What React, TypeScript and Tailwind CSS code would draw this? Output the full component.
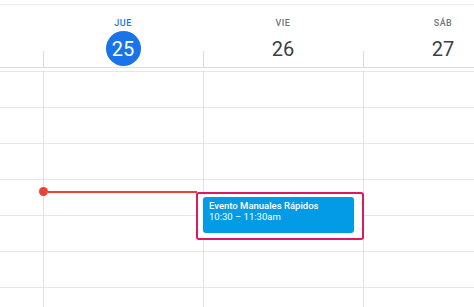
import React from "react";

const days = [
  { label: "JUE", num: "25", today: true },
  { label: "VIE", num: "26", today: false },
  { label: "SÁB", num: "27", today: false },
];

const hours = [0, 1, 2, 3, 4, 5, 6];

export default function App() {
  return (
    <div
      className="h-[307px] w-[474px] overflow-hidden bg-white"
      style={{ fontFamily: "Roboto, 'Noto Sans', Arial, sans-serif" }}
    >
      <div className="h-[5px] border-b border-[#ececec]" />

      {/* Day header */}
      <div className="flex h-[63px] border-b border-[#dadce0]">
        <div className="w-[43px] shrink-0" />
        {days.map((d) => (
          <div
            key={d.num}
            className="relative flex w-[160px] shrink-0 flex-col items-center pt-[12px] before:absolute before:bottom-0 before:left-0 before:h-[16px] before:border-l before:border-[#dadce0]"
          >
            <span
              className={`text-[9px] font-medium leading-[12px] tracking-[0.5px] ${
                d.today ? "text-[#1a73e8]" : "text-[#70757a]"
              }`}
            >
              {d.label}
            </span>
            {d.today ? (
              <div className="mt-[2px] flex h-[35px] w-[35px] items-center justify-center rounded-full bg-[#1a73e8] text-[20px] text-white">
                {d.num}
              </div>
            ) : (
              <div className="mt-[2px] flex h-[35px] items-center text-[20px] text-[#3c4043]">
                {d.num}
              </div>
            )}
          </div>
        ))}
      </div>

      {/* Grid body */}
      <div className="relative mt-[3px] flex">
        <div className="w-[43px] shrink-0">
          {hours.map((h) => (
            <div key={h} className="h-[36px] border-t border-[#e6e6e6]" />
          ))}
        </div>
        {days.map((d) => (
          <div key={d.num} className="w-[160px] shrink-0 border-l border-[#e0e0e0]">
            {hours.map((h) => (
              <div key={h} className="h-[36px] border-t border-[#e6e6e6]" />
            ))}
          </div>
        ))}

        {/* current time line */}
        <div className="absolute left-[39px] top-[116px] flex w-[158px] items-center">
          <div className="h-[9px] w-[9px] shrink-0 rounded-full bg-[#ea4335]" />
          <div className="h-[2px] flex-1 bg-[#ea4335]" />
        </div>

        {/* highlighted event */}
        <div className="absolute left-[196px] top-[121px] h-[48px] w-[168px] rounded-[3px] border-2 border-[#d81b60] bg-white p-[3px] pl-[5px]">
          <div className="h-[36px] w-[151px] rounded-[3px] bg-[#039be5] px-[6px] pt-[3px] text-[9.5px] font-medium leading-[11px] text-white">
            <div>Evento Manuales Rápidos</div>
            <div className="font-normal">10:30 – 11:30am</div>
          </div>
        </div>
      </div>
    </div>
  );
}
